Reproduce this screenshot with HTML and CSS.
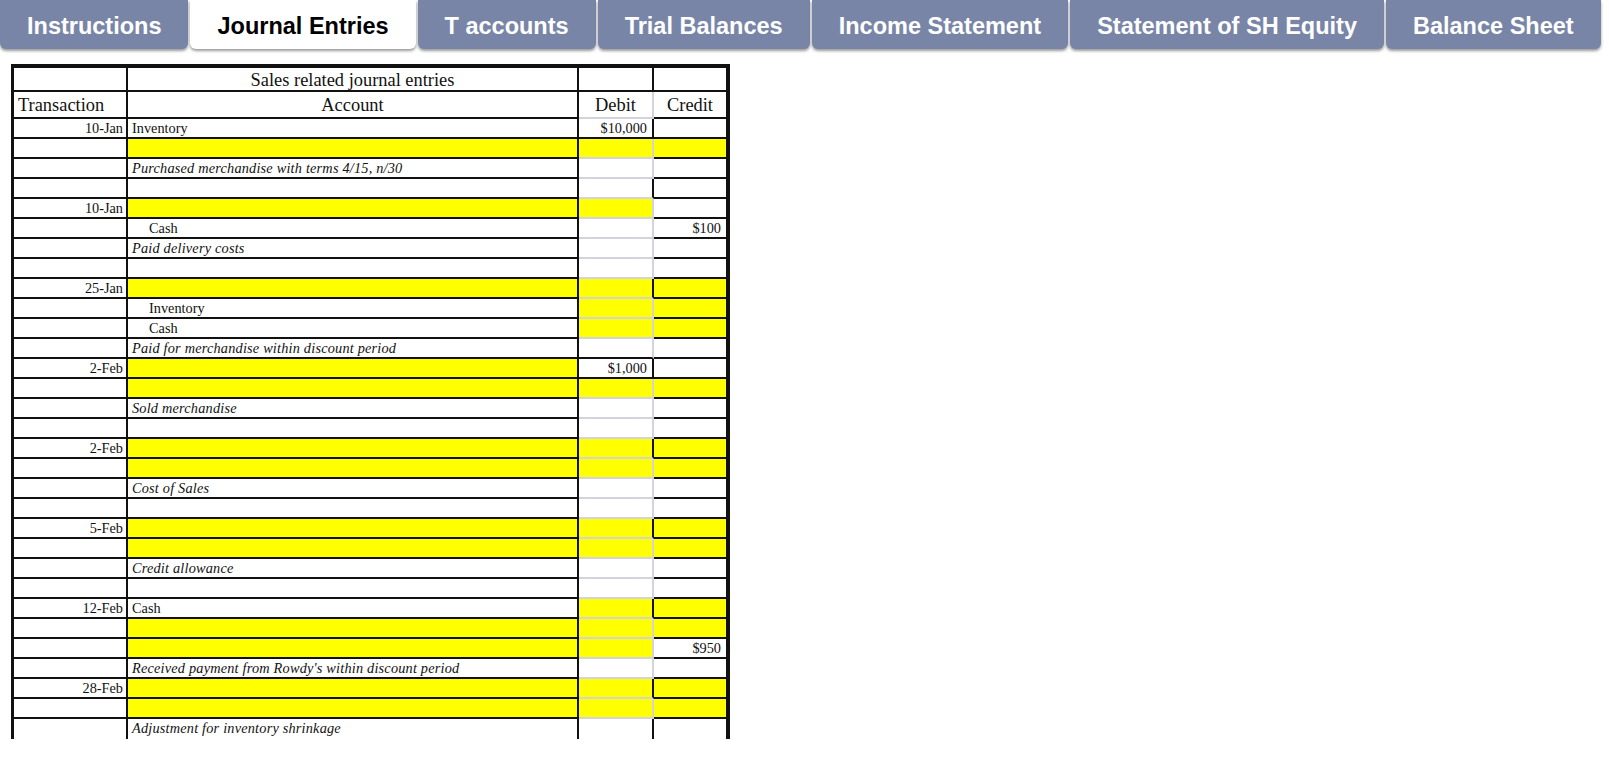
FILE: index.html
```html
<!DOCTYPE html>
<html lang="en">
<head>
<meta charset="utf-8">
<title>Journal Entries</title>
<link rel="stylesheet" href="styles.css">
</head>
<body>
<nav class="tabs">
  <div class="tab">Instructions</div>
  <div class="tab active">Journal Entries</div>
  <div class="tab">T accounts</div>
  <div class="tab">Trial Balances</div>
  <div class="tab">Income Statement</div>
  <div class="tab">Statement of SH Equity</div>
  <div class="tab">Balance Sheet</div>
</nav>

<table class="sheet">
  <colgroup>
    <col class="c-date">
    <col class="c-acct">
    <col class="c-dr">
    <col class="c-cr">
  </colgroup>
  <thead>
    <tr class="h1">
      <th></th>
      <th class="center">Sales related journal entries</th>
      <th class="dr kb kr"></th>
      <th></th>
    </tr>
    <tr class="h2">
      <th class="left">Transaction</th>
      <th class="center">Account</th>
      <th class="dr center">Debit</th>
      <th class="center">Credit</th>
    </tr>
  </thead>
  <tbody>
    <tr><td class="date">10-Jan</td><td>Inventory</td><td class="dr num kb kr">$10,000</td><td></td></tr>
    <tr><td></td><td class="y"></td><td class="dr y"></td><td class="y"></td></tr>
    <tr><td></td><td class="it">Purchased merchandise with terms 4/15, n/30</td><td class="dr"></td><td></td></tr>
    <tr><td></td><td></td><td class="dr kr"></td><td></td></tr>
    <tr><td class="date">10-Jan</td><td class="y"></td><td class="dr y"></td><td></td></tr>
    <tr><td></td><td class="ind">Cash</td><td class="dr"></td><td class="num">$100</td></tr>
    <tr><td></td><td class="it">Paid delivery costs</td><td class="dr"></td><td></td></tr>
    <tr><td></td><td></td><td class="dr"></td><td></td></tr>
    <tr><td class="date">25-Jan</td><td class="y"></td><td class="dr y kr"></td><td class="y"></td></tr>
    <tr><td></td><td class="ind">Inventory</td><td class="dr y"></td><td class="y"></td></tr>
    <tr><td></td><td class="ind">Cash</td><td class="dr y"></td><td class="y"></td></tr>
    <tr><td></td><td class="it">Paid for merchandise within discount period</td><td class="dr kb"></td><td></td></tr>
    <tr><td class="date">2-Feb</td><td class="y"></td><td class="dr num kb kr">$1,000</td><td></td></tr>
    <tr><td></td><td class="y"></td><td class="dr y"></td><td class="y"></td></tr>
    <tr><td></td><td class="it">Sold merchandise</td><td class="dr"></td><td></td></tr>
    <tr><td></td><td></td><td class="dr"></td><td></td></tr>
    <tr><td class="date">2-Feb</td><td class="y"></td><td class="dr y kr"></td><td class="y"></td></tr>
    <tr><td></td><td class="y"></td><td class="dr y"></td><td class="y"></td></tr>
    <tr><td></td><td class="it">Cost of Sales</td><td class="dr"></td><td></td></tr>
    <tr><td></td><td></td><td class="dr"></td><td></td></tr>
    <tr><td class="date">5-Feb</td><td class="y"></td><td class="dr y kr"></td><td class="y"></td></tr>
    <tr><td></td><td class="y"></td><td class="dr y"></td><td class="y"></td></tr>
    <tr><td></td><td class="it">Credit allowance</td><td class="dr"></td><td></td></tr>
    <tr><td></td><td></td><td class="dr"></td><td></td></tr>
    <tr><td class="date">12-Feb</td><td>Cash</td><td class="dr y kr"></td><td class="y"></td></tr>
    <tr><td></td><td class="y"></td><td class="dr y"></td><td class="y"></td></tr>
    <tr><td></td><td class="y"></td><td class="dr y"></td><td class="num">$950</td></tr>
    <tr><td></td><td class="it">Received payment from Rowdy's within discount period</td><td class="dr"></td><td></td></tr>
    <tr><td class="date">28-Feb</td><td class="y"></td><td class="dr y kr"></td><td class="y"></td></tr>
    <tr><td></td><td class="y"></td><td class="dr y"></td><td class="y"></td></tr>
    <tr class="last"><td></td><td class="it">Adjustment for inventory shrinkage</td><td class="dr kr"></td><td></td></tr>
  </tbody>
</table>
</body>
</html>
```

FILE: styles.css
```css
html, body {
  margin: 0;
  padding: 0;
  background: #ffffff;
}

body {
  font-family: "Liberation Serif", "Times New Roman", serif;
  color: #111111;
}

/* ---------- tab bar ---------- */
.tabs {
  display: flex;
  gap: 2px;
  height: 49px;
}

.tab {
  flex: none;
  box-sizing: border-box;
  height: 49px;
  padding: 3px 27px 0;
  line-height: 46px;
  font-family: "Liberation Sans", Arial, sans-serif;
  font-weight: bold;
  font-size: 23.5px;
  color: #ffffff;
  background: #7985a7;
  border-radius: 0 0 6px 6px;
  box-shadow: 0 2px 3px rgba(0, 0, 0, 0.4);
  white-space: nowrap;
}

.tab.active {
  background: #ffffff;
  color: #000000;
}

/* ---------- sheet ---------- */
.sheet {
  margin: 15px 0 0 11px;
  border-collapse: separate;
  border-spacing: 0;
  table-layout: fixed;
  width: 719px;
  border-top: 4px solid #111;
  border-left: 3px solid #111;
  border-right: 4px solid #111;
}

.c-date { width: 114px; }
.c-acct { width: 451px; }
.c-dr { width: 75px; }
.c-cr { width: 72px; }

.sheet th,
.sheet td {
  padding: 0;
  border-right: 2px solid #111;
  border-bottom: 2px solid #111;
  white-space: nowrap;
  vertical-align: top;
}

.sheet th:last-child,
.sheet td:last-child {
  border-right: none;
}

.sheet th {
  font-weight: normal;
  font-size: 18.4px;
}

.h1 {
  height: 24px;
}

.h2 {
  height: 27px;
}

.h1 th {
  padding-top: 2px;
  line-height: 20px;
}

.h2 th {
  padding-top: 4px;
  line-height: 19px;
}

.sheet th.left {
  text-align: left;
  padding-left: 4px;
}

.sheet th.center {
  text-align: center;
}

.sheet tbody tr {
  height: 20px;
}

.sheet td {
  font-size: 14.3px;
  padding-top: 1px;
  line-height: 17px;
  text-align: left;
  padding-left: 4px;
  padding-right: 4px;
}

.sheet tr.last td {
  border-bottom: none;
}

.sheet td.date {
  text-align: right;
  padding-right: 3px;
}

.sheet td.num {
  text-align: right;
  padding-right: 5px;
}

.sheet td.it {
  font-style: italic;
  letter-spacing: 0.2px;
}

.sheet td.ind {
  padding-left: 21px;
}

.sheet td.y {
  background: #ffff00;
}

/* debit column: light grid lines unless boxed */
.sheet .dr {
  border-right-color: #d3d3dc;
  border-bottom-color: #d3d3dc;
}

.sheet .dr.kb {
  border-bottom-color: #111;
}

.sheet .dr.kr {
  border-right-color: #111;
}
```
